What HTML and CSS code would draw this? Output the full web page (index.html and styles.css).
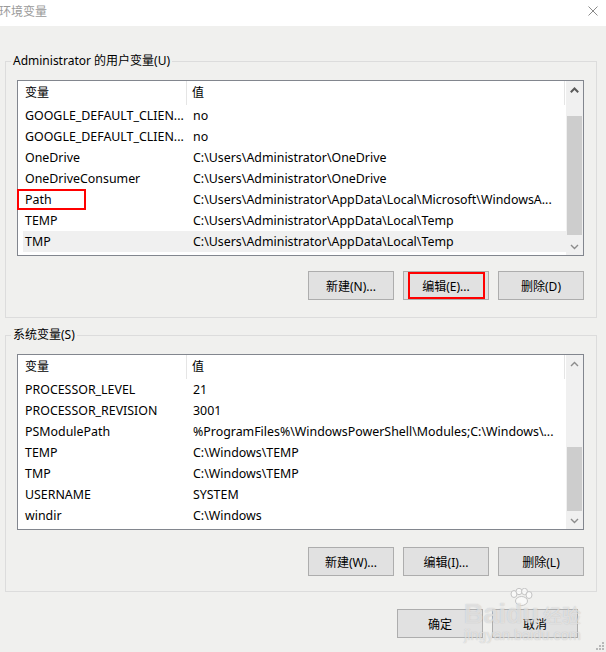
FILE: index.html
```html
<!DOCTYPE html>
<html lang="zh-CN">
<head>
    <meta charset="UTF-8">
    <title>环境变量</title>
    <link rel="stylesheet" href="styles.css">
</head>
<body>
    <div class="window">
        <div class="titlebar">
            <span class="title">环境变量</span>
            <svg class="close" width="10" height="10" viewBox="0 0 10 10">
                <path d="M0.5 0.5 L9.5 9.5 M9.5 0.5 L0.5 9.5" stroke="#8a8a8a" stroke-width="1" fill="none"/>
            </svg>
        </div>

        <div class="content">
            <fieldset class="group">
                <legend>Administrator 的用户变量(U)</legend>
                <div class="list">
                    <div class="list-main">
                        <div class="list-head">
                            <div class="head-cell head-name">变量</div>
                            <div class="head-cell head-value">值</div>
                        </div>
                        <div class="row"><span class="cell">GOOGLE_DEFAULT_CLIEN...</span><span class="cell">no</span></div>
                        <div class="row"><span class="cell">GOOGLE_DEFAULT_CLIEN...</span><span class="cell">no</span></div>
                        <div class="row"><span class="cell">OneDrive</span><span class="cell">C:\Users\Administrator\OneDrive</span></div>
                        <div class="row"><span class="cell">OneDriveConsumer</span><span class="cell">C:\Users\Administrator\OneDrive</span></div>
                        <div class="row"><span class="cell">Path</span><span class="cell">C:\Users\Administrator\AppData\Local\Microsoft\WindowsA...</span><span class="mark mark-path"></span></div>
                        <div class="row"><span class="cell">TEMP</span><span class="cell">C:\Users\Administrator\AppData\Local\Temp</span></div>
                        <div class="row selected"><span class="cell">TMP</span><span class="cell">C:\Users\Administrator\AppData\Local\Temp</span></div>
                    </div>
                    <div class="scrollbar">
                        <div class="arrow">
                            <svg width="9" height="6" viewBox="0 0 9 6"><path d="M0.8 5.2 L4.5 1.5 L8.2 5.2" stroke="#5a5a5a" stroke-width="2" fill="none"/></svg>
                        </div>
                        <div class="track">
                            <div class="thumb" style="margin-top: 18px; height: 119px;"></div>
                        </div>
                        <div class="arrow">
                            <svg width="9" height="6" viewBox="0 0 9 6"><path d="M1 1 L4.5 4.5 L8 1" stroke="#8c8c8c" stroke-width="1.4" fill="none"/></svg>
                        </div>
                    </div>
                </div>
                <div class="buttons">
                    <button class="btn">新建(N)...</button>
                    <button class="btn">编辑(E)...<span class="mark mark-btn"></span></button>
                    <button class="btn">删除(D)</button>
                </div>
            </fieldset>

            <fieldset class="group group-system">
                <legend>系统变量(S)</legend>
                <div class="list">
                    <div class="list-main">
                        <div class="list-head">
                            <div class="head-cell head-name">变量</div>
                            <div class="head-cell head-value">值</div>
                        </div>
                        <div class="row"><span class="cell">PROCESSOR_LEVEL</span><span class="cell">21</span></div>
                        <div class="row"><span class="cell">PROCESSOR_REVISION</span><span class="cell">3001</span></div>
                        <div class="row"><span class="cell">PSModulePath</span><span class="cell">%ProgramFiles%\WindowsPowerShell\Modules;C:\Windows\...</span></div>
                        <div class="row"><span class="cell">TEMP</span><span class="cell">C:\Windows\TEMP</span></div>
                        <div class="row"><span class="cell">TMP</span><span class="cell">C:\Windows\TEMP</span></div>
                        <div class="row"><span class="cell">USERNAME</span><span class="cell">SYSTEM</span></div>
                        <div class="row"><span class="cell">windir</span><span class="cell">C:\Windows</span></div>
                    </div>
                    <div class="scrollbar">
                        <div class="arrow">
                            <svg width="9" height="6" viewBox="0 0 9 6"><path d="M1 5 L4.5 1.5 L8 5" stroke="#8c8c8c" stroke-width="1.4" fill="none"/></svg>
                        </div>
                        <div class="track">
                            <div class="thumb" style="margin-top: 75px; height: 64px;"></div>
                        </div>
                        <div class="arrow">
                            <svg width="9" height="6" viewBox="0 0 9 6"><path d="M1 1 L4.5 4.5 L8 1" stroke="#8c8c8c" stroke-width="1.4" fill="none"/></svg>
                        </div>
                    </div>
                </div>
                <div class="buttons">
                    <button class="btn">新建(W)...</button>
                    <button class="btn">编辑(I)...</button>
                    <button class="btn">删除(L)</button>
                </div>
            </fieldset>

            <div class="footer">
                <button class="btn">确定</button>
                <button class="btn">取消</button>
            </div>
        </div>

        <!-- watermark from the screenshot source -->
        <div class="watermark">
            <svg class="wm-paw" width="26" height="18" viewBox="0 0 26 18">
                <g fill="rgba(255,255,255,0.6)" stroke="#c4c4c4" stroke-width="1">
                    <ellipse cx="6" cy="6" rx="3" ry="3.5"/>
                    <ellipse cx="11" cy="3.5" rx="3" ry="3.2"/>
                    <ellipse cx="16.5" cy="3.5" rx="3" ry="3.2"/>
                    <ellipse cx="21" cy="7" rx="3" ry="3.5"/>
                    <ellipse cx="13.5" cy="13" rx="6" ry="4.5"/>
                </g>
            </svg>
            <div class="wm-logo">Bai<span class="wm-du">du</span><span class="wm-jy">经验</span></div>
            <div class="wm-url">jingyan.baidu.com</div>
        </div>

        <svg class="grip" width="8" height="8" viewBox="0 0 8 8">
            <rect x="6" y="0" width="2" height="2" fill="#b8b8b8"/>
            <rect x="3" y="3" width="2" height="2" fill="#b8b8b8"/>
            <rect x="6" y="3" width="2" height="2" fill="#b8b8b8"/>
            <rect x="0" y="6" width="2" height="2" fill="#b8b8b8"/>
            <rect x="3" y="6" width="2" height="2" fill="#b8b8b8"/>
            <rect x="6" y="6" width="2" height="2" fill="#b8b8b8"/>
        </svg>
    </div>
</body>
</html>
```

FILE: styles.css
```css
body {
    margin: 0;
    padding: 0;
    font-family: "Noto Sans", "Noto Sans CJK SC", sans-serif;
    font-size: 12px;
    color: #000;
    background-color: #f0f0f0;
}
.window {
    position: relative;
    width: 606px;
    height: 652px;
    overflow: hidden;
    background-color: #f0f0ee;
}
.titlebar {
    display: flex;
    align-items: center;
    justify-content: space-between;
    height: 26px;
    background-color: #fff;
    padding: 0 8px 5px 0;
    box-sizing: border-box;
}
.title {
    color: #9a9a9a;
    font-size: 12px;
    margin-left: -1px;
}
.content {
    padding: 27px 9px 0 5px;
}
.group {
    margin: 0;
    padding: 11px 12px 0 11px;
    border: 1px solid #dcdcdc;
}
.group legend {
    margin-left: -6px;
    padding: 0 2px;
    line-height: 16px;
}
.group-system {
    margin-top: 9px;
}
.list {
    display: flex;
    height: 176px;
    box-sizing: border-box;
    border: 1px solid #82868e;
    background-color: #fff;
}
.list-main {
    flex-grow: 1;
}
.list-head {
    display: flex;
    height: 24px;
    margin-right: 1px;
}
.head-cell {
    line-height: 24px;
}
.head-name {
    width: 169px;
    padding-left: 7px;
    box-sizing: border-box;
    border-right: 1px solid #e5e5e5;
}
.head-value {
    flex-grow: 1;
    padding-left: 5px;
    border-right: 1px solid #e5e5e5;
}
.row {
    position: relative;
    display: grid;
    grid-template-columns: 168px 1fr;
    height: 21px;
    line-height: 21px;
    margin-left: 5px;
    font-size: 12.4px;
    white-space: nowrap;
}
.row.selected {
    background-color: #f0f0f0;
}
.cell {
    padding-left: 2px;
    overflow: hidden;
}
.scrollbar {
    display: flex;
    flex-direction: column;
    width: 17px;
    background-color: #f0f0f0;
}
.arrow {
    display: flex;
    align-items: center;
    justify-content: center;
    height: 17px;
}
.track {
    flex-grow: 1;
}
.thumb {
    width: 15px;
    margin-left: 1px;
    background-color: #cdcdcd;
}
.buttons {
    display: flex;
    justify-content: flex-end;
    gap: 9px;
    margin-top: 15px;
    padding-bottom: 17px;
}
.group-system .buttons {
    margin-top: 17px;
    padding-bottom: 15px;
}
.btn {
    position: relative;
    width: 86px;
    height: 29px;
    padding: 0;
    font-family: inherit;
    font-size: 12px;
    color: #000;
    background-color: #e1e1e1;
    border: 1px solid #adadad;
}
.footer {
    display: flex;
    justify-content: flex-end;
    gap: 9px;
    margin-top: 17px;
    padding-right: 19px;
}
.mark {
    position: absolute;
    box-sizing: border-box;
    border: 2px solid #f00;
}
.mark-path {
    left: -6px;
    top: 0;
    width: 69px;
    height: 21px;
}
.mark-btn {
    left: 4px;
    right: 3px;
    top: 0;
    bottom: 0;
}
.watermark {
    position: absolute;
    left: 464px;
    top: 588px;
    color: rgba(255, 255, 255, 0.55);
    text-shadow: 0 0 1px rgba(150, 150, 150, 0.6);
    pointer-events: none;
}
.wm-paw {
    display: block;
    margin-left: 44px;
}
.wm-logo {
    font-family: "Liberation Sans", sans-serif;
    font-size: 27px;
    font-weight: bold;
    line-height: 24px;
    margin-top: -4px;
}
.wm-jy {
    font-family: "Noto Sans CJK SC", sans-serif;
    font-size: 19px;
    font-weight: normal;
    margin-left: 4px;
}
.wm-url {
    font-family: "Liberation Sans", sans-serif;
    font-size: 14.5px;
    line-height: 14px;
    margin-top: 1px;
}
.grip {
    position: absolute;
    right: 2px;
    bottom: 2px;
}
```
